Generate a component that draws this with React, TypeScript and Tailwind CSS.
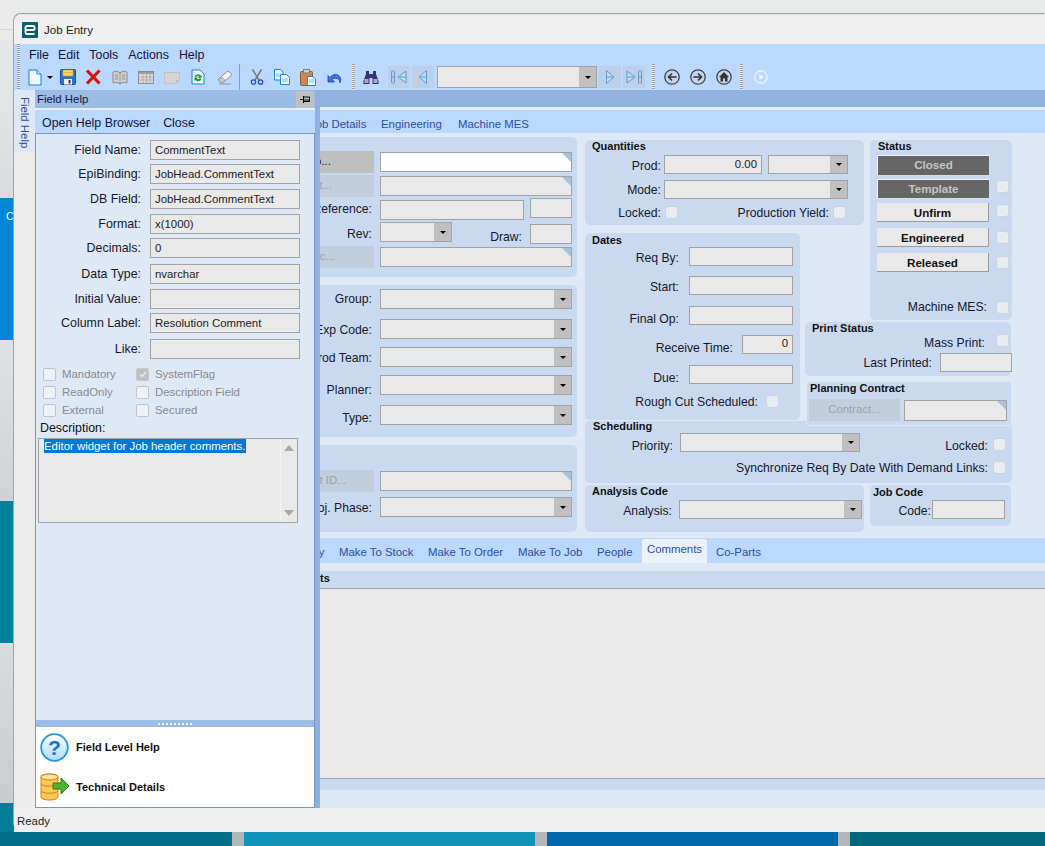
import React from "react";

const cx = (...a: (string | undefined | false)[]) => a.filter(Boolean).join(" ");

function Input({ c, corner, white, right, children }: { c: string; corner?: boolean; white?: boolean; right?: boolean; children?: React.ReactNode }) {
  return (
    <div className={cx("relative shrink-0 border border-[#a3a3a3] flex items-center px-[4px] pt-[1px] text-[11.4px] text-[#222]", white ? "bg-white" : "bg-[#e9e9e9]", right && "justify-end", c)}>
      {children}
      {corner && <div className="absolute top-0 right-0 w-0 h-0 border-l-[9px] border-l-transparent border-t-[9px] border-t-[#a9c0df]" />}
    </div>
  );
}

function Combo({ c }: { c: string }) {
  return (
    <div className={cx("shrink-0 border border-[#a3a3a3] bg-[#e9e9e9] flex justify-end", c)}>
      <div className="w-[17px] bg-[#c0c0c0] flex items-center justify-center">
        <div className="w-0 h-0 border-l-[3px] border-r-[3px] border-t-[3px] border-l-transparent border-r-transparent border-t-black" />
      </div>
    </div>
  );
}

function Check({ c }: { c?: string }) {
  return <div className={cx("shrink-0 w-[13px] h-[13px] rounded-[3px] bg-[#e8ecf2] border border-[#cfd3d8]", c)} />;
}

function L({ c, big, children }: { c: string; big?: boolean; children: React.ReactNode }) {
  return <div className={cx("shrink-0 text-right whitespace-nowrap leading-[14px] text-[#17172b]", big ? "text-[12.4px]" : "text-[12.2px]", c)}>{children}</div>;
}

function Title({ c, children }: { c: string; children: React.ReactNode }) {
  return <div className={cx("font-bold text-[11px] text-[#111] whitespace-nowrap", c)}>{children}</div>;
}

function Btn({ c, children, dis, on }: { c: string; children: React.ReactNode; dis?: boolean; on?: boolean }) {
  return (
    <div className={cx("shrink-0 flex items-center justify-center text-[11.4px] whitespace-nowrap", dis ? "bg-[#c3cedd] text-[#9aa3ad]" : on ? "bg-[#bfbfbf] text-[#222]" : "", c)}>
      {children}
    </div>
  );
}

function StatusBtn({ c, dark, children }: { c: string; dark?: boolean; children: React.ReactNode }) {
  return (
    <div className={cx("shrink-0 flex items-center justify-center font-bold text-[11.6px]", dark ? "bg-[#666666] text-[#c4c4c4] border border-[#f4f6f9] border-b-[#d8dce2] border-r-[#d8dce2] pb-[1px]" : "bg-[#e9e9e9] text-[#111] border-b border-r border-[#9c9c9c] pt-[1px]", c)}>
      {children}
    </div>
  );
}

const Grip = ({ c }: { c?: string }) => (
  <div className={cx("shrink-0 w-[3px] bg-[#eef2f7] bg-[repeating-linear-gradient(180deg,#9c9c9c_0px,#9c9c9c_1px,#e8ecf2_1px,#e8ecf2_2px)]", c)} />
);

/* toolbar icons */
const NewDoc = () => (
  <svg width="14" height="17" viewBox="0 0 14 17"><path d="M1 1h8l4 4v11H1z" fill="#f2f8ff" stroke="#0a84e8" /><path d="M9 1v4h4" fill="#cfe6fb" stroke="#0a84e8" /></svg>
);
const Arrow = () => <div className="w-0 h-0 border-l-[3px] border-r-[3px] border-t-[3px] border-l-transparent border-r-transparent border-t-black" />;
const Save = () => (
  <svg width="16" height="16" viewBox="0 0 16 16"><rect x="0.5" y="0.5" width="15" height="15" rx="1" fill="#2a6fd6" stroke="#1b4fa5" /><rect x="3" y="1" width="10" height="6" fill="#ffd860" stroke="#c99a20" strokeWidth="0.6" /><rect x="3" y="3" width="10" height="1" fill="#f2b72d" /><rect x="4" y="10" width="8" height="5.5" fill="#f4f6fa" /><rect x="8.5" y="11" width="2" height="3.5" fill="#334" /></svg>
);
const Del = () => (
  <svg width="16" height="16" viewBox="0 0 16 16"><path d="M2 1.5L14.5 14.5M14.5 1.5L2 14.5" stroke="#d8140f" strokeWidth="3.2" /></svg>
);
const Book = () => (
  <svg width="16" height="15" viewBox="0 0 16 15"><path d="M1 2c2-1 5-1 7 1 2-2 5-2 7-1v11c-2-1-5-1-7 1-2-2-5-2-7-1z" fill="#cfcfcf" stroke="#8a8a8a" /><path d="M8 3v11M3 5h3M3 7h3M3 9h3M10 5h3M10 7h3M10 9h3" stroke="#8a8a8a" strokeWidth="0.8" /></svg>
);
const Table = () => (
  <svg width="16" height="13" viewBox="0 0 16 13"><rect x="0.5" y="0.5" width="15" height="12" fill="#dcdcdc" stroke="#8f8f8f" /><rect x="1" y="1" width="14" height="2" fill="#9f9f9f" /><path d="M1 6h14M1 9h14M5 3v9M8.500 3v9M12 3v9" stroke="#a5a5a5" strokeWidth="0.8" /></svg>
);
const Note = () => (
  <svg width="16" height="13" viewBox="0 0 16 13"><path d="M0.5 1.500h15V9l-3.500 3.500H0.500z" fill="#d4d4d4" stroke="#c0c0c0" /><path d="M15.500 9H12v3.500z" fill="#bdbdbd" /></svg>
);
const Refresh = () => (
  <svg width="14" height="16" viewBox="0 0 14 16"><path d="M1 1h8l4 4v10H1z" fill="#eef7ff" stroke="#1389e0" /><path d="M3.500 7.500c1-2.500 4.500-3 6-1l1-1v3.500H7l1.200-1.200c-1-1-2.500-.7-3 .5z" fill="#2ea52e" /><path d="M10.500 10c-1 2.500-4.500 3-6 1l-1 1V8.500H7L5.800 9.700c1 1 2.500.7 3-.5z" fill="#1f8f2a" /></svg>
);
const Eraser = () => (
  <svg width="15" height="15" viewBox="0 0 15 15"><path d="M1 9.500L9.500 2c1-.8 2-.8 3 0l1.500 1.500c.7.8.7 1.800 0 2.500L6 12.500H3.500z" fill="#f1f1f1" stroke="#8d8d8d" /><path d="M1 9.500l2.500 3H6l2.300-2-3-3.200z" fill="#c6c6c6" stroke="#8d8d8d" strokeWidth="0.6" /><path d="M2 14h12" stroke="#8f9ab0" /></svg>
);
const Cut = () => (
  <svg width="14" height="16" viewBox="0 0 14 16"><path d="M2.500 0.500L9 11M11.500 0.500L5 11" stroke="#7a7a7a" strokeWidth="1.500" /><circle cx="3.500" cy="13" r="2.200" fill="none" stroke="#1c4fc4" strokeWidth="1.300" /><circle cx="10.500" cy="13" r="2.200" fill="none" stroke="#1c4fc4" strokeWidth="1.300" /></svg>
);
const Copy = () => (
  <svg width="16" height="16" viewBox="0 0 16 16"><path d="M0.500 0.500h6l2.500 2.500v8H0.500z" fill="#f3f9ff" stroke="#1388e6" /><path d="M6.500 5.500h6l3 3v7h-9z" fill="#f3f9ff" stroke="#1388e6" /><path d="M2 5h5M2 7h5M8 10h6M8 12h6" stroke="#5aaef0" strokeWidth="0.8" /></svg>
);
const Paste = () => (
  <svg width="16" height="17" viewBox="0 0 16 17"><rect x="0.500" y="2.500" width="12" height="14" rx="1" fill="#c98a55" stroke="#8d5a30" /><rect x="3.500" y="0.500" width="6" height="3.500" fill="#cfcfcf" stroke="#7d7d7d" /><path d="M7.500 7.500h5l3 2.500v6.500h-8z" fill="#f3f9ff" stroke="#1388e6" /><path d="M9 11h5M9 13h5" stroke="#5aaef0" strokeWidth="0.8" /></svg>
);
const Undo = () => (
  <svg width="16" height="14" viewBox="0 0 16 14"><path d="M4 6.500c3-3 8-2.500 9.500 1.500.5 1.500.3 3-.5 5-.2-3-2-5-5-4.800-1.200.1-2 .5-2.800 1.300L7.500 12H1V5.500l1.500 2z" fill="#3f74dc" stroke="#1c45a8" strokeWidth="0.8" /></svg>
);
const Binoc = () => (
  <svg width="16" height="15" viewBox="0 0 16 15"><path d="M3 1h3v3h4V1h3v3l2.500 7v3h-6V8H6.500v6h-6v-3L3 4z" fill="#34346e" /><rect x="1.500" y="9" width="4" height="4" fill="#a8a8d8" /><rect x="10.500" y="9" width="4" height="4" fill="#a8a8d8" /></svg>
);
const NavBox = ({ children }: { children: React.ReactNode }) => (
  <div className="shrink-0 w-[22px] h-[22px] bg-[#bdd0e8] flex items-center justify-center">{children}</div>
);
const First = () => (
  <svg width="16" height="14" viewBox="0 0 16 14"><rect x="0.500" y="1" width="3" height="12" rx="1" fill="#b8cfe8" stroke="#5f9bd8" /><path d="M15 1L7 7l8 6z" fill="#c6dbf0" stroke="#5f9bd8" /><path d="M1 7h2M9 7h6" stroke="#5f9bd8" /></svg>
);
const Prev = () => (
  <svg width="10" height="14" viewBox="0 0 10 14"><path d="M8.500 0.500L1 7l7.500 6.500z" fill="#c6dbf0" stroke="#5f9bd8" /><path d="M2 7h6.500" stroke="#5f9bd8" /></svg>
);
const Next = () => (
  <svg width="10" height="14" viewBox="0 0 10 14"><path d="M1.500 0.500L9 7l-7.500 6.500z" fill="#c6dbf0" stroke="#5f9bd8" /><path d="M1.500 7H8" stroke="#5f9bd8" /></svg>
);
const Last = () => (
  <svg width="16" height="14" viewBox="0 0 16 14"><path d="M1 1l8 6-8 6z" fill="#c6dbf0" stroke="#5f9bd8" /><rect x="12.500" y="1" width="3" height="12" rx="1" fill="#b8cfe8" stroke="#5f9bd8" /><path d="M1 7h7M13 7h2" stroke="#5f9bd8" /></svg>
);
const Circ = ({ children }: { children: React.ReactNode }) => (
  <svg width="16" height="16" viewBox="0 0 16 16"><circle cx="8" cy="8" r="7.200" fill="#c3d6ee" stroke="#444" strokeWidth="1.300" />{children}</svg>
);
const Back = () => <Circ><path d="M12.500 8H4.500M8 4.500L4.500 8 8 11.500" fill="none" stroke="#333" strokeWidth="1.600" /></Circ>;
const Fwd = () => <Circ><path d="M3.500 8h8M8 4.500L11.500 8 8 11.500" fill="none" stroke="#333" strokeWidth="1.600" /></Circ>;
const Home = () => <Circ><path d="M8 3L3 8h1.500v4.500h2.500V9.500h2v3h2.500V8H13z" fill="#333" /></Circ>;
const Play = () => (
  <svg width="14" height="14" viewBox="0 0 14 14"><circle cx="7" cy="7" r="6.200" fill="none" stroke="#eef5ff" strokeWidth="1.300" /><path d="M5.500 4l4 3-4 3z" fill="#eef5ff" /></svg>
);
const Pin = () => (
  <svg width="11" height="9" viewBox="0 0 11 9"><path d="M0 4.500h3M3.500 1v7M3.500 2h6v4.500h-6M3.500 5h6" fill="none" stroke="#000" strokeWidth="1" /></svg>
);
const Logo = () => (
  <svg width="16" height="16" viewBox="0 0 16 16"><rect width="16" height="16" rx="1" fill="#0b5e70" /><path d="M12.500 8H3.800M12.500 8V5.200Q12.500 4 11 4H5Q3.500 4 3.500 5.500V10.500Q3.500 12 5 12H12.500" fill="none" stroke="#fff" strokeWidth="1.800" /></svg>
);
const Help = () => (
  <svg width="29" height="29" viewBox="0 0 29 29">
    <defs><linearGradient id="hg" x1="0" y1="0" x2="0" y2="1"><stop offset="0" stopColor="#ffffff" /><stop offset="1" stopColor="#a8dcfa" /></linearGradient></defs>
    <circle cx="14.500" cy="14.500" r="13.300" fill="url(#hg)" stroke="#1a97e8" strokeWidth="1.800" />
    <text x="14.500" y="22" textAnchor="middle" fontSize="21" fontWeight="700" fill="#1a6fd0" fontFamily="'Liberation Sans',sans-serif">?</text>
  </svg>
);
const Db = () => (
  <svg width="30" height="28" viewBox="0 0 30 28">
    <path d="M1 4c0-4 17-4 17 0v20c0 4-17 4-17 0z" fill="#fbc95a" stroke="#d97f0a" />
    <ellipse cx="9.500" cy="4" rx="8.500" ry="3" fill="#ffe49a" stroke="#d97f0a" />
    <path d="M1 11c2 3 15 3 17 0M1 18c2 3 15 3 17 0" fill="none" stroke="#d97f0a" />
    <path d="M13 10h8V5l8 8-8 8v-5h-8z" fill="#4db52e" stroke="#2f7d1d" />
  </svg>
);

function Field({ label, value, c }: { label: string; value?: string; c?: string }) {
  return (
    <div className={cx("flex items-center h-[20px]", c)}>
      <L big c="w-[105px]">{label}</L>
      <Input c="ml-[9px] w-[150px] h-[20px]">{value}</Input>
    </div>
  );
}

function Ck({ label, on, c }: { label: string; on?: boolean; c: string }) {
  return (
    <div className={cx("flex items-center shrink-0", c)}>
      {on ? (
        <div className="shrink-0 w-[13px] h-[13px] rounded-[2px] bg-[#bfbfbf] border border-[#c8c8c8] flex items-center justify-center">
          <svg width="8" height="7" viewBox="0 0 8 7"><path d="M1 3.500L3 5.500 7 1" fill="none" stroke="#f0f0f0" strokeWidth="1.200" /></svg>
        </div>
      ) : (
        <div className="shrink-0 w-[13px] h-[13px] rounded-[2px] bg-[#eef2f8] border border-[#c4c4c4]" />
      )}
      <span className="ml-[6px] pb-[2px] text-[11.400px] leading-[14px] text-[#8a8a8f] whitespace-nowrap">{label}</span>
    </div>
  );
}

function FieldHelp() {
  return (
    <div className="absolute left-[21px] top-0 bottom-0 w-[285px] flex z-20">
      <div className="w-[280px] flex flex-col">
        <div className="h-[18px] bg-[#9bbce6] flex items-center pl-[2px] pr-[1px] justify-between">
          <span className="text-[11.400px] pt-[2px] text-[#14143a]">Field Help</span>
          <div className="w-[18px] h-[17px] bg-[#c0c0c0] flex items-center justify-center"><Pin /></div>
        </div>
        <div className="h-[2px] bg-[#e6eefa]" />
        <div className="h-[23px] bg-[#bbd8ff] flex items-center pl-[7px] pt-[4px] text-[12.400px] text-[#14143a] gap-[13px]">
          <span>Open Help Browser</span>
          <span>Close</span>
        </div>
        <div className="flex-1 flex flex-col border border-[#6f98d0] bg-[#dfe8f5] min-h-0">
          <div className="flex-1 pt-[6px]">
            <Field label="Field Name:" value="CommentText" />
            <Field label="EpiBinding:" value="JobHead.CommentText" c="mt-[4px]" />
            <Field label="DB Field:" value="JobHead.CommentText" c="mt-[5px]" />
            <Field label="Format:" value="x(1000)" c="mt-[5px]" />
            <Field label="Decimals:" value="0" c="mt-[4px]" />
            <Field label="Data Type:" value="nvarchar" c="mt-[6px]" />
            <Field label="Initial Value:" c="mt-[5px]" />
            <Field label="Column Label:" value="Resolution Comment" c="mt-[4px]" />
            <Field label="Like:" c="mt-[6px]" />
            <div className="flex h-[13px] mt-[9px] pl-[7px]">
              <Ck label="Mandatory" c="w-[93px]" />
              <Ck label="SystemFlag" on c="w-[93px]" />
            </div>
            <div className="flex h-[13px] mt-[5px] pl-[7px]">
              <Ck label="ReadOnly" c="w-[93px]" />
              <Ck label="Description Field" c="w-[93px]" />
            </div>
            <div className="flex h-[13px] mt-[5px] pl-[7px]">
              <Ck label="External" c="w-[93px]" />
              <Ck label="Secured" c="w-[93px]" />
            </div>
            <div className="mt-[4px] ml-[4px] h-[14px] text-[12.400px] leading-[14px] text-[#111]">Description:</div>
            <div className="mt-[3px] ml-[2px] w-[260px] h-[85px] border border-[#a3a3a3] bg-[#e9e9e9] flex">
              <div className="flex-1 pl-[5px] pt-[0px]">
                <span className="block w-fit bg-[#0078d7] text-white text-[11.400px] leading-[14px] pr-[1px]">Editor widget for Job header comments.</span>
              </div>
              <div className="w-[17px] border-l border-[#f2f2f2] flex flex-col justify-between items-center py-[6px]">
                <div className="w-0 h-0 border-l-[5px] border-r-[5px] border-b-[6px] border-l-transparent border-r-transparent border-b-[#a9a9a9]" />
                <div className="w-0 h-0 border-l-[5px] border-r-[5px] border-t-[6px] border-l-transparent border-r-transparent border-t-[#a9a9a9]" />
              </div>
            </div>
          </div>
          <div className="h-[7px] bg-[#9bbce6] flex items-center justify-center shrink-0">
            <div className="w-[35px] h-[2px] bg-[repeating-linear-gradient(90deg,#f4f8fd_0px,#f4f8fd_2px,#9bbce6_2px,#9bbce6_4px)]" />
          </div>
          <div className="h-[80px] bg-white shrink-0 pl-[4px] pt-[6px]">
            <div className="flex items-center h-[28px]">
              <div className="w-[36px] shrink-0"><Help /></div>
              <span className="font-bold text-[11px] text-[#111]">Field Level Help</span>
            </div>
            <div className="flex items-center h-[28px] mt-[12px]">
              <div className="w-[36px] shrink-0"><Db /></div>
              <span className="font-bold text-[11px] text-[#111]">Technical Details</span>
            </div>
          </div>
        </div>
      </div>
      <div className="w-[5px] bg-[#8fb0e3]" />
    </div>
  );
}

function ColA() {
  const g = "bg-[#c9daf0] rounded-[5px] w-[337px]";
  return (
    <div className="ml-[205px] w-[337px] pt-[4px] shrink-0">
      <div className={cx(g, "h-[140px] pt-[14px]")}>
        <div className="flex items-center h-[22px]">
          <Btn on c="ml-[20px] w-[114px] h-[22px]">Job...</Btn>
          <Input white corner c="ml-[6px] w-[192px] h-[20px]" />
        </div>
        <div className="flex items-center h-[22px] mt-[2px]">
          <Btn dis c="ml-[20px] w-[114px] h-[22px]">Part...</Btn>
          <Input corner c="ml-[6px] w-[192px] h-[20px]" />
        </div>
        <div className="flex h-[22px] mt-[1px]">
          <L c="w-[132px] self-end pb-[4px]">Reference:</L>
          <Input c="ml-[8px] w-[144px] h-[20px] mt-[2px]" />
          <Input c="ml-[6px] w-[42px] h-[20px]" />
        </div>
        <div className="flex h-[22px] mt-[2px]">
          <L c="w-[132px] self-end pb-[3px]">Rev:</L>
          <Combo c="ml-[8px] w-[72px] h-[20px]" />
          <L c="w-[70px] self-end">Draw:</L>
          <Input c="ml-[8px] w-[42px] h-[20px] mt-[2px]" />
        </div>
        <div className="flex items-center h-[22px] mt-[2px]">
          <Btn dis c="ml-[20px] w-[114px] h-[22px]">Desc...</Btn>
          <Input corner c="ml-[6px] w-[192px] h-[20px]" />
        </div>
      </div>
      <div className={cx(g, "h-[152px] mt-[8px] pt-[4px]")}>
        <div className="flex items-center h-[20px]"><L c="w-[132px]">Group:</L><Combo c="ml-[8px] w-[192px] h-[20px]" /></div>
        <div className="flex items-center h-[20px] mt-[10px]"><L c="w-[132px] pt-[2px]">Exp Code:</L><Combo c="ml-[8px] w-[192px] h-[20px]" /></div>
        <div className="flex items-center h-[20px] mt-[8px]"><L c="w-[132px] pt-[2px]">Prod Team:</L><Combo c="ml-[8px] w-[192px] h-[20px]" /></div>
        <div className="flex items-center h-[20px] mt-[8px]"><L c="w-[132px] pt-[10px]">Planner:</L><Combo c="ml-[8px] w-[192px] h-[20px]" /></div>
        <div className="flex items-center h-[20px] mt-[10px]"><L c="w-[132px] pt-[6px]">Type:</L><Combo c="ml-[8px] w-[192px] h-[20px]" /></div>
      </div>
      <div className={cx(g, "h-[87px] mt-[8px] pt-[25px]")}>
        <div className="flex items-center h-[22px]">
          <Btn dis c="ml-[20px] w-[114px] h-[22px]">Project ID...</Btn>
          <Input corner c="ml-[6px] w-[192px] h-[20px]" />
        </div>
        <div className="flex items-center h-[20px] mt-[5px]"><L c="w-[132px] pt-[2px]">Proj. Phase:</L><Combo c="ml-[8px] w-[192px] h-[20px]" /></div>
      </div>
    </div>
  );
}

function ColB() {
  const g = "bg-[#c9daf0] rounded-[5px]";
  return (
    <div className="ml-[8px] w-[427px] pt-[7px] shrink-0">
      <div className="flex h-[286px]">
        <div className="w-[215px] shrink-0">
          <div className={cx(g, "w-[279px] h-[85px]")}>
            <Title c="h-[13px] pl-[7px] leading-[13px]">Quantities</Title>
            <div className="flex items-center h-[19px] mt-[2px]">
              <L c="w-[76px] pt-[2px]">Prod:</L>
              <Input right c="ml-[3px] w-[98px] h-[19px]">0.00</Input>
              <Combo c="ml-[6px] w-[80px] h-[19px]" />
            </div>
            <div className="flex items-center h-[19px] mt-[6px]">
              <L c="w-[76px]">Mode:</L>
              <Combo c="ml-[3px] w-[184px] h-[19px]" />
            </div>
            <div className="flex items-center h-[14px] mt-[7px]">
              <L c="w-[76px]">Locked:</L>
              <Check c="ml-[4px] mb-[2px]" />
              <L c="w-[151px]">Production Yield:</L>
              <Check c="ml-[4px] mb-[2px]" />
            </div>
          </div>
          <div className={cx(g, "h-[187px] mt-[8px]")}>
            <Title c="h-[14px] pl-[7px] leading-[14px]">Dates</Title>
            <div className="flex items-center h-[19px]"><L c="w-[94px] pt-[2px]">Req By:</L><Input c="ml-[10px] w-[104px] h-[19px]" /></div>
            <div className="flex items-center h-[19px] mt-[10px]"><L c="w-[94px] pt-[2px]">Start:</L><Input c="ml-[10px] w-[104px] h-[19px]" /></div>
            <div className="flex items-center h-[19px] mt-[11px]"><L c="w-[94px] pt-[6px]">Final Op:</L><Input c="ml-[10px] w-[104px] h-[19px]" /></div>
            <div className="flex items-center h-[19px] mt-[10px]"><L c="w-[148px] pt-[6px]">Receive Time:</L><Input right c="ml-[9px] w-[51px] h-[19px] pb-[3px]">0</Input></div>
            <div className="flex items-center h-[19px] mt-[11px]"><L c="w-[94px] pt-[6px]">Due:</L><Input c="ml-[10px] w-[104px] h-[19px]" /></div>
            <div className="flex items-center h-[13px] mt-[11px]"><L c="w-[173px]">Rough Cut Scheduled:</L><Check c="ml-[8px]" /></div>
          </div>
        </div>
        <div className="ml-[5px] w-[207px] shrink-0 flex flex-col">
          <div className={cx(g, "w-[142px] h-[180px] self-end")}>
            <Title c="h-[13px] pl-[8px] leading-[13px]">Status</Title>
            <StatusBtn dark c="ml-[7px] mt-[2px] w-[113px] h-[21px]">Closed</StatusBtn>
            <div className="flex items-center mt-[3px] ml-[7px]">
              <StatusBtn dark c="w-[113px] h-[20px]">Template</StatusBtn>
              <Check c="ml-[6px] mb-[5px]" />
            </div>
            <div className="flex items-center mt-[4px] ml-[7px]">
              <StatusBtn c="w-[112px] h-[19px]">Unfirm</StatusBtn>
              <Check c="ml-[7px] mb-[5px]" />
            </div>
            <div className="flex items-center mt-[6px] ml-[7px]">
              <StatusBtn c="w-[112px] h-[19px]">Engineered</StatusBtn>
              <Check c="ml-[7px]" />
            </div>
            <div className="flex items-center mt-[6px] ml-[7px]">
              <StatusBtn c="w-[112px] h-[19px]">Released</StatusBtn>
              <Check c="ml-[7px]" />
            </div>
            <div className="flex items-center mt-[28px]">
              <L c="w-[117px]">Machine MES:</L>
              <Check c="ml-[9px]" />
            </div>
          </div>
          <div className={cx(g, "w-[206px] h-[54px] mt-[2px]")}>
            <Title c="h-[13px] pl-[7px] leading-[13px]">Print Status</Title>
            <div className="flex items-center h-[13px] mt-[1px]"><L c="w-[180px]">Mass Print:</L><Check c="ml-[11px] mb-[4px]" /></div>
            <div className="flex items-center h-[19px] mt-[4px]"><L c="w-[127px]">Last Printed:</L><Input c="ml-[8px] w-[72px] h-[19px]" /></div>
          </div>
          <div className={cx(g, "relative z-10 border border-[#dfe8f5] ml-[1px] w-[206px] h-[45px] mt-[5px]")}>
            <Title c="h-[13px] pl-[3px] leading-[13px]">Planning Contract</Title>
            <div className="flex items-center mt-[4px]">
              <Btn dis c="ml-[2px] w-[91px] h-[22px]">Contract...</Btn>
              <Input corner c="ml-[4px] w-[103px] h-[21px]" />
            </div>
          </div>
        </div>
      </div>
      <div className={cx(g, "h-[62px] mt-[-5px]")}>
        <Title c="h-[11px] pl-[8px] leading-[11px]">Scheduling</Title>
        <div className="flex items-center h-[19px] mt-[1px]">
          <L c="w-[88px] pt-[7px]">Priority:</L>
          <Combo c="ml-[7px] w-[180px] h-[19px]" />
          <L c="w-[128px] pt-[6px]">Locked:</L>
          <Check c="ml-[5px] mt-[3px]" />
        </div>
        <div className="flex items-center h-[13px] mt-[9px]">
          <L c="w-[403px]">Synchronize Req By Date With Demand Links:</L>
          <Check c="ml-[5px]" />
        </div>
      </div>
      <div className="flex mt-[2px]">
        <div className={cx(g, "w-[279px] h-[47px] shrink-0")}>
          <Title c="h-[13px] pl-[7px] leading-[13px]">Analysis Code</Title>
          <div className="flex items-center h-[19px] mt-[2px]">
            <L c="w-[87px] pt-[2px]">Analysis:</L>
            <Combo c="ml-[7px] w-[183px] h-[19px]" />
          </div>
        </div>
        <div className={cx(g, "ml-[6px] w-[141px] h-[41px] shrink-0")}>
          <Title c="h-[14px] pl-[3px] leading-[14px]">Job Code</Title>
          <div className="flex items-center h-[19px] mt-[1px]">
            <L c="w-[61px] pt-[3px]">Code:</L>
            <Input c="ml-[1px] w-[73px] h-[19px]" />
          </div>
        </div>
      </div>
    </div>
  );
}

const Tab = ({ c, children }: { c: string; children: React.ReactNode }) => (
  <span className={cx("shrink-0 whitespace-nowrap text-[11.400px] text-[#2d4f9f]", c)}>{children}</span>
);

function Main() {
  return (
    <div className="flex-1 min-w-0 flex flex-col overflow-hidden">
      <div className="h-[17px] bg-[#92b2e0] shrink-0" />
      <div className="h-[3px] bg-[#e6eefa] shrink-0" />
      <div className="h-[23px] bg-[#bbd8ff] shrink-0 flex items-center pl-[275px] pt-[7px]">
        <Tab c="w-[71px]">Job Details</Tab>
        <Tab c="w-[77px]">Engineering</Tab>
        <Tab c="w-[80px]">Machine MES</Tab>
      </div>
      <div className="h-[405px] shrink-0 bg-[#dfe8f5] flex">
        <ColA />
        <ColB />
      </div>
      <div className="h-[25px] shrink-0 bg-[#bbd8ff] flex pl-[230px]">
        <Tab c="w-[74px] self-center pt-[5px] pl-[10px]">Assembly</Tab>
        <Tab c="w-[89px] self-center pt-[5px]">Make To Stock</Tab>
        <Tab c="w-[90px] self-center pt-[5px]">Make To Order</Tab>
        <Tab c="w-[79px] self-center pt-[5px]">Make To Job</Tab>
        <Tab c="w-[45px] self-center pt-[5px]">People</Tab>
        <div className="w-[65px] shrink-0 h-[24px] mt-[1px] pb-[2px] bg-[#ebf2fb] rounded-t-[3px] flex items-center justify-center"><Tab c="">Comments</Tab></div>
        <Tab c="ml-[9px] self-center pt-[5px]">Co-Parts</Tab>
      </div>
      <div className="h-[8px] shrink-0 bg-[#dfe8f5]" />
      <div className="h-[17px] shrink-0 bg-[#c9daf0] flex items-center pl-[238px] pb-[3px] font-bold text-[11px] text-[#111]">Comments</div>
      <div className="h-[191px] shrink-0 bg-[#e9e9e9] border-y border-[#a3a3a3]" />
      <div className="h-[11px] shrink-0 bg-[#c9daf0]" />
      <div className="h-[18px] shrink-0 bg-[#dfe8f5]" />
    </div>
  );
}

export default function App() {
  return (
    <div className="relative w-[1045px] h-[846px] overflow-hidden bg-[#e9eaea] [font-family:'Liberation_Sans',Arial,sans-serif]">
      {/* desktop behind the window */}
      <div className="absolute left-0 top-0 w-[14px] h-[846px] flex flex-col">
        <div className="h-[30px] bg-[#ebebeb] border-b border-[#d5d5d5]" />
        <div className="h-[168px] bg-[linear-gradient(180deg,#e8e9ea,#d9dcde)]" />
        <div className="h-[142px] bg-[#0285d4] text-white text-[11px] pt-[10px] pl-[6px]">C</div>
        <div className="h-[161px] bg-[linear-gradient(180deg,#dfe2e4,#cfd3d6)]" />
        <div className="h-[142px] bg-[#00809b]" />
        <div className="h-[160px] bg-[linear-gradient(180deg,#d9dcdf,#c9cdd0)]" />
        <div className="flex-1 bg-[#007d98]" />
      </div>
      <div className="absolute left-0 bottom-0 w-[1045px] h-[14px] flex">
        <div className="w-[232px] bg-[#006f87]" />
        <div className="w-[12px] bg-[#b4b7b9]" />
        <div className="w-[291px] bg-[#0e93b9]" />
        <div className="w-[12px] bg-[#b4b7b9]" />
        <div className="w-[291px] bg-[#0069ac]" />
        <div className="w-[12px] bg-[#b4b7b9]" />
        <div className="flex-1 bg-[#00677d]" />
      </div>

      {/* the window */}
      <div className="absolute left-[14px] top-[14px] w-[1031px] h-[818px] rounded-l-[8px] overflow-hidden flex flex-col bg-[#f0f0f0] shadow-[-1px_-1px_0_#a3a3a3]">
        <div className="h-[30px] shrink-0 bg-[#f0f0f0] flex items-center pl-[8px] border-t border-[#e0e0e0]">
          <Logo />
          <span className="ml-[6px] text-[11.600px] text-[#222]">Job Entry</span>
        </div>
        <div className="h-[46px] shrink-0 bg-[#bbd8ff] flex flex-col">
          <div className="h-[20px] shrink-0 flex items-center text-[12.400px] text-[#14143a]">
            <Grip c="ml-[3px] h-[20px]" />
            <span className="ml-[9px] pt-[2px]">File</span>
            <span className="ml-[9px] pt-[2px]">Edit</span>
            <span className="ml-[10px] pt-[2px]">Tools</span>
            <span className="ml-[10px] pt-[2px]">Actions</span>
            <span className="ml-[10px] pt-[2px]">Help</span>
          </div>
          <div className="h-[26px] shrink-0 flex items-center">
            <Grip c="ml-[3px] h-[26px]" />
            <div className="ml-[8px] shrink-0 w-[14px] flex"><NewDoc /></div>
            <div className="ml-[5px] shrink-0 w-[6px]"><Arrow /></div>
            <div className="ml-[7px] shrink-0 w-[16px] flex"><Save /></div>
            <div className="ml-[9px] shrink-0 w-[16px] flex"><Del /></div>
            <div className="ml-[11px] shrink-0 w-[16px] flex"><Book /></div>
            <div className="ml-[10px] shrink-0 w-[16px] flex"><Table /></div>
            <div className="ml-[10px] shrink-0 w-[16px] flex"><Note /></div>
            <div className="ml-[11px] shrink-0 w-[14px] flex"><Refresh /></div>
            <div className="ml-[12px] shrink-0 w-[15px] flex"><Eraser /></div>
            <div className="ml-[7px] shrink-0 w-px h-[26px] bg-[#8f9eb0]" />
            <div className="ml-[10px] shrink-0 w-[14px] flex"><Cut /></div>
            <div className="ml-[10px] shrink-0 w-[16px] flex"><Copy /></div>
            <div className="ml-[10px] shrink-0 w-[16px] flex"><Paste /></div>
            <div className="ml-[11px] shrink-0 w-[16px] flex"><Undo /></div>
            <Grip c="ml-[9px] h-[26px]" />
            <div className="ml-[8px] shrink-0 w-[16px] flex"><Binoc /></div>
            <div className="ml-[9px]"><NavBox><First /></NavBox></div>
            <div className="ml-[2px]"><NavBox><Prev /></NavBox></div>
            <Combo c="ml-[3px] w-[160px] h-[22px]" />
            <div className="ml-[2px]"><NavBox><Next /></NavBox></div>
            <div className="ml-[2px]"><NavBox><Last /></NavBox></div>
            <Grip c="ml-[7px] h-[26px]" />
            <div className="ml-[9px] shrink-0 w-[16px] flex"><Back /></div>
            <div className="ml-[10px] shrink-0 w-[16px] flex"><Fwd /></div>
            <div className="ml-[10px] shrink-0 w-[16px] flex"><Home /></div>
            <Grip c="ml-[8px] h-[26px]" />
            <div className="ml-[11px] shrink-0 w-[14px] flex"><Play /></div>
          </div>
        </div>
        <div className="relative h-[718px] shrink-0 flex">
          <div className="w-[21px] shrink-0 bg-[#ececec]">
            <div className="h-[62px] bg-[#dfe8f5] flex justify-center pt-[7px]">
              <span className="[writing-mode:vertical-rl] text-[11.400px] leading-[14px] text-[#2d4f9f] whitespace-nowrap">Field Help</span>
            </div>
          </div>
          <Main />
          <FieldHelp />
        </div>
        <div className="h-[24px] shrink-0 bg-[#f0f0f0] flex items-center pl-[3px] pt-[3px] text-[11.400px] text-[#222]">Ready</div>
      </div>
    </div>
  );
}
